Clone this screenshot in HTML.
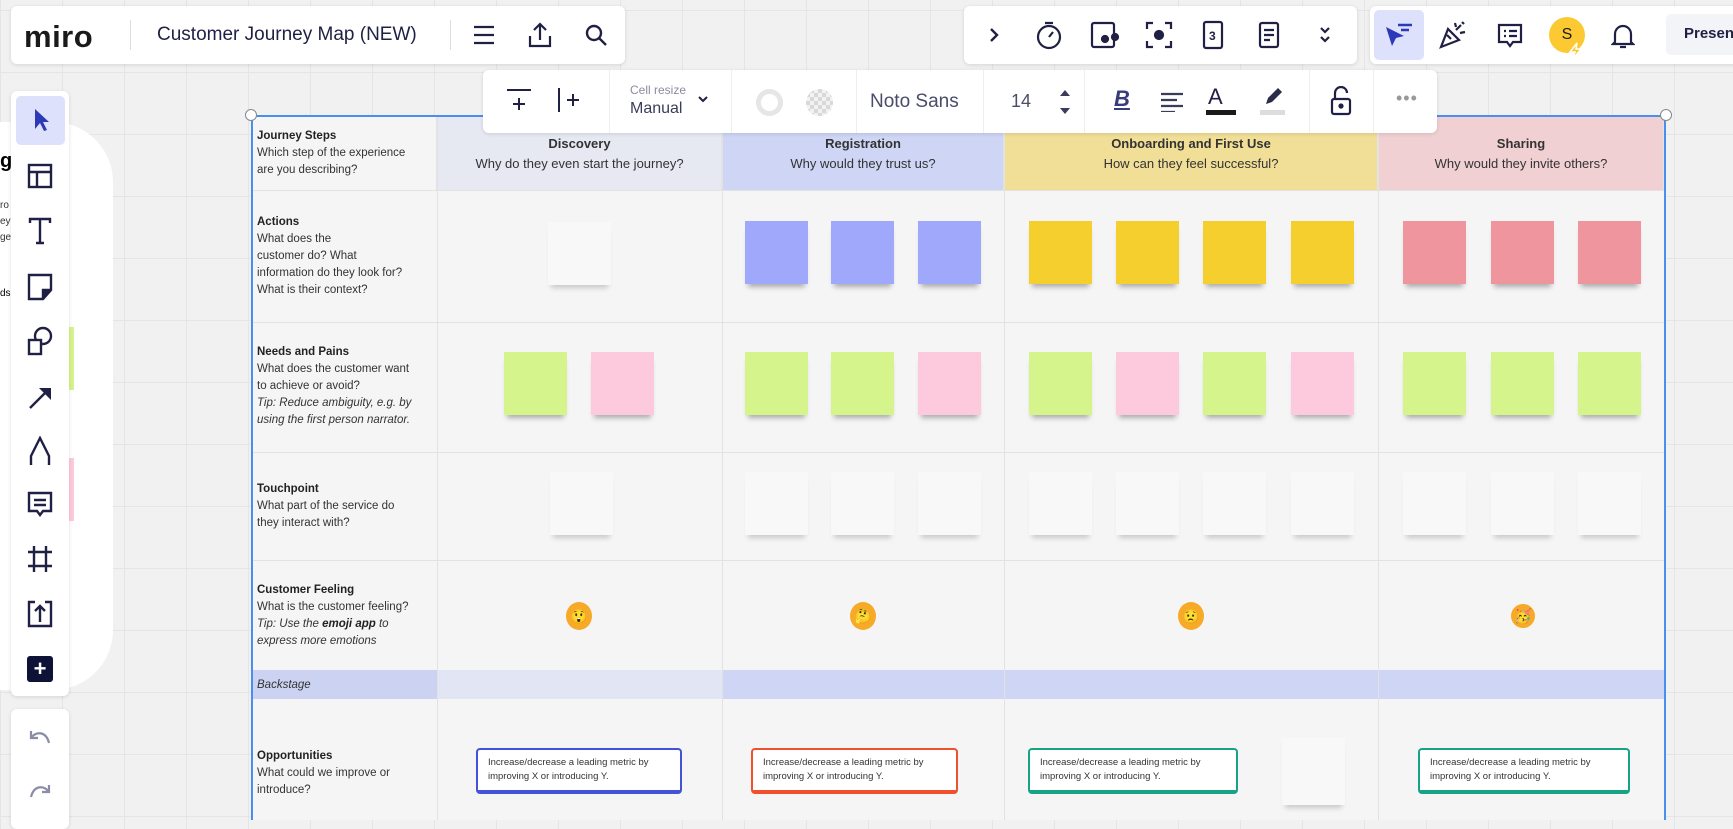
<!DOCTYPE html>
<html><head><meta charset="utf-8"><style>
*{box-sizing:border-box;margin:0;padding:0}
body{width:1733px;height:820px;overflow:hidden;position:relative;font-family:"Liberation Sans",sans-serif;background:#f1f1f1;
background-image:linear-gradient(#e5e5e5 1px,transparent 1px),linear-gradient(90deg,#e5e5e5 1px,transparent 1px);background-size:62px 62px;background-position:0 10px}
.a{position:absolute}
.panel{position:absolute;background:#fff;border-radius:6px;box-shadow:0 1px 4px rgba(0,0,0,.12)}
.cell{position:absolute;background:#f5f5f5;border-right:1px solid #e2e2e2;border-bottom:1px solid #e2e2e2}
.lab{position:absolute;left:257px;font-size:11.5px;line-height:17px;color:#333}
.lab b{color:#222}
.hd{position:absolute;text-align:center;font-size:13px;line-height:20px;color:#333}
.st{position:absolute;width:63px;height:63px;box-shadow:0 6px 5px -3px rgba(0,0,0,.3)}
.bl{background:#9fa8fa}.ye{background:#f5cf2e}.rd{background:#ee959e}.gr{background:#d6f48c}.pk{background:#fdc9dc}.wh{background:#f8f8f9;box-shadow:0 6px 5px -3px rgba(0,0,0,.18)}
.op{position:absolute;height:46px;background:#fff;border:2px solid;border-bottom-width:4px;border-radius:4px;font-size:9.5px;line-height:14px;color:#333;padding:6px 10px}
.em{position:absolute;width:26px;height:28px;border-radius:50%;background:#f7a928;font-size:14px;text-align:center;line-height:28px}
svg{position:absolute}
</style></head><body>

<div class="a" style="left:0;top:122px;width:113px;height:568px;background:#fff;border-radius:0 60px 60px 0"></div>
<div class="a" style="left:0;top:150px;font-size:20px;font-weight:bold">g</div>
<div class="a" style="left:0;top:198px;font-size:10px;line-height:16px;color:#333">ro<br>ey<br>ge</div>
<div class="a" style="left:0;top:288px;font-size:10px">ds</div>
<div class="a" style="left:69px;top:327px;width:5px;height:63px;background:#d6f48c"></div>
<div class="a" style="left:69px;top:458px;width:5px;height:63px;background:#fdc9dc"></div>

<div class="a" style="left:251px;top:115px;width:1415px;height:705px;background:#f5f5f5;border-left:2px solid #4a8ef0;border-right:2px solid #4a8ef0;border-top:2px solid #4a8ef0"></div>
<div class="cell" style="left:253px;top:117px;width:184px;height:74px"></div>
<div class="cell" style="left:437px;top:117px;width:285px;height:74px;background:#e6e8f2"></div>
<div class="cell" style="left:722px;top:117px;width:282px;height:74px;background:#cfd6f5"></div>
<div class="cell" style="left:1004px;top:117px;width:374px;height:74px;background:#f1df97"></div>
<div class="cell" style="left:1378px;top:117px;width:286px;height:74px;background:#f0d0d3"></div>
<div class="a" style="left:253px;top:322px;width:1411px;height:1px;background:#e2e2e2"></div>
<div class="a" style="left:253px;top:452px;width:1411px;height:1px;background:#e2e2e2"></div>
<div class="a" style="left:253px;top:560px;width:1411px;height:1px;background:#e2e2e2"></div>
<div class="a" style="left:253px;top:670px;width:1411px;height:29px;background:#cfd6f5"></div>
<div class="a" style="left:253px;top:670px;width:184px;height:29px;background:#ccd3f2"></div>
<div class="a" style="left:437px;top:670px;width:285px;height:29px;background:#e2e5f3"></div>
<div class="a" style="left:437px;top:117px;width:1px;height:703px;background:#e2e2e2"></div>
<div class="a" style="left:722px;top:117px;width:1px;height:703px;background:#e2e2e2"></div>
<div class="a" style="left:1004px;top:117px;width:1px;height:703px;background:#e2e2e2"></div>
<div class="a" style="left:1378px;top:117px;width:1px;height:703px;background:#e2e2e2"></div>
<div class="a" style="left:245px;top:109px;width:12px;height:12px;border-radius:50%;background:#fff;border:1.5px solid #888"></div>
<div class="a" style="left:1660px;top:109px;width:12px;height:12px;border-radius:50%;background:#fff;border:1.5px solid #888"></div>

<div class="lab" style="top:128px"><b>Journey Steps</b><br>Which step of the experience<br>are you describing?</div>
<div class="lab" style="top:214px"><b>Actions</b><br>What does the<br>customer do? What<br>information do they look for?<br>What is their context?</div>
<div class="lab" style="top:344px"><b>Needs and Pains</b><br>What does the customer want<br>to achieve or avoid?<br><i>Tip: Reduce ambiguity, e.g. by<br>using the first person narrator.</i></div>
<div class="lab" style="top:481px"><b>Touchpoint</b><br>What part of the service do<br>they interact with?</div>
<div class="lab" style="top:582px"><b>Customer Feeling</b><br>What is the customer feeling?<br><i>Tip: Use the <b>emoji app</b> to<br>express more emotions</i></div>
<div class="lab" style="top:677px"><i>Backstage</i></div>
<div class="lab" style="top:748px"><b>Opportunities</b><br>What could we improve or<br>introduce?</div>

<div class="hd" style="left:437px;top:134px;width:285px"><b>Discovery</b><br>Why do they even start the journey?</div>
<div class="hd" style="left:722px;top:134px;width:282px"><b>Registration</b><br>Why would they trust us?</div>
<div class="hd" style="left:1004px;top:134px;width:374px"><b>Onboarding and First Use</b><br>How can they feel successful?</div>
<div class="hd" style="left:1378px;top:134px;width:286px"><b>Sharing</b><br>Why would they invite others?</div>

<div class="st wh" style="left:548px;top:222px"></div>
<div class="st bl" style="left:745px;top:221px"></div><div class="st bl" style="left:831px;top:221px"></div><div class="st bl" style="left:918px;top:221px"></div>
<div class="st ye" style="left:1029px;top:221px"></div><div class="st ye" style="left:1116px;top:221px"></div><div class="st ye" style="left:1203px;top:221px"></div><div class="st ye" style="left:1291px;top:221px"></div>
<div class="st rd" style="left:1403px;top:221px"></div><div class="st rd" style="left:1491px;top:221px"></div><div class="st rd" style="left:1578px;top:221px"></div>
<div class="st gr" style="left:504px;top:352px"></div><div class="st pk" style="left:591px;top:352px"></div>
<div class="st gr" style="left:745px;top:352px"></div><div class="st gr" style="left:831px;top:352px"></div><div class="st pk" style="left:918px;top:352px"></div>
<div class="st gr" style="left:1029px;top:352px"></div><div class="st pk" style="left:1116px;top:352px"></div><div class="st gr" style="left:1203px;top:352px"></div><div class="st pk" style="left:1291px;top:352px"></div>
<div class="st gr" style="left:1403px;top:352px"></div><div class="st gr" style="left:1491px;top:352px"></div><div class="st gr" style="left:1578px;top:352px"></div>
<div class="st wh" style="left:550px;top:472px"></div>
<div class="st wh" style="left:745px;top:472px"></div><div class="st wh" style="left:831px;top:472px"></div><div class="st wh" style="left:918px;top:472px"></div>
<div class="st wh" style="left:1029px;top:472px"></div><div class="st wh" style="left:1116px;top:472px"></div><div class="st wh" style="left:1203px;top:472px"></div><div class="st wh" style="left:1291px;top:472px"></div>
<div class="st wh" style="left:1403px;top:472px"></div><div class="st wh" style="left:1491px;top:472px"></div><div class="st wh" style="left:1578px;top:472px"></div>
<div class="em" style="left:566px;top:602px">😲</div>
<div class="em" style="left:850px;top:602px">🤔</div>
<div class="em" style="left:1178px;top:602px">😟</div>
<div class="em" style="left:1511px;top:604px;width:24px;height:24px;line-height:24px">🥳</div>
<div class="op" style="left:476px;top:748px;width:206px;border-color:#4353d8">Increase/decrease a leading metric by<br>improving X or introducing Y.</div>
<div class="op" style="left:751px;top:748px;width:207px;border-color:#f0502e">Increase/decrease a leading metric by<br>improving X or introducing Y.</div>
<div class="op" style="left:1028px;top:748px;width:210px;border-color:#17a386">Increase/decrease a leading metric by<br>improving X or introducing Y.</div>
<div class="op" style="left:1418px;top:748px;width:212px;border-color:#17a386">Increase/decrease a leading metric by<br>improving X or introducing Y.</div>
<div class="st wh" style="left:1282px;top:738px;height:67px"></div>

<div class="panel" style="left:11px;top:6px;width:614px;height:58px"></div>
<div class="a" style="left:24px;top:19px;font-size:31px;font-weight:bold;color:#1a1a1a;letter-spacing:.5px">miro</div>
<div class="a" style="left:130px;top:20px;width:1px;height:30px;background:#ddd"></div>
<div class="a" style="left:157px;top:24px;font-size:19px;color:#1f2044">Customer Journey Map (NEW)</div>
<div class="a" style="left:450px;top:20px;width:1px;height:30px;background:#ddd"></div>
<svg style="left:472px;top:24px" width="24" height="22" viewBox="0 0 24 22" fill="none" stroke="#1f2044" stroke-width="2.2"><path d="M2 3h20M2 11h20M2 19h20"/></svg>
<svg style="left:527px;top:21px" width="26" height="28" viewBox="0 0 26 28" fill="none" stroke="#1f2044" stroke-width="2.2"><path d="M13 19V3M7 9l6-6 6 6M3 15v10h20V15"/></svg>
<svg style="left:584px;top:23px" width="24" height="24" viewBox="0 0 24 24" fill="none" stroke="#1f2044" stroke-width="2.4"><circle cx="10" cy="10" r="7"/><path d="M15 15l7 7"/></svg>

<div class="panel" style="left:964px;top:6px;width:393px;height:58px"></div>
<svg style="left:989px;top:28px" width="10" height="14" viewBox="0 0 10 14" fill="none" stroke="#1f2044" stroke-width="2.4"><path d="M2 1l6 6-6 6"/></svg>
<svg style="left:1035px;top:20px" width="28" height="30" viewBox="0 0 28 30" fill="none" stroke="#1f2044" stroke-width="2.2"><circle cx="14" cy="17" r="11"/><path d="M10 3h8M14 17l4-5"/></svg>
<svg style="left:1090px;top:21px" width="30" height="28" viewBox="0 0 30 28" fill="none" stroke="#1f2044" stroke-width="2.2"><rect x="2" y="2" width="22" height="24" rx="2"/><circle cx="15" cy="18" r="3" fill="#1f2044"/><circle cx="25" cy="16" r="3" fill="#1f2044"/></svg>
<svg style="left:1145px;top:21px" width="28" height="28" viewBox="0 0 28 28" fill="none" stroke="#1f2044" stroke-width="2.2"><path d="M2 8V2h6M20 2h6v6M26 20v6h-6M8 26H2v-6"/><circle cx="14" cy="14" r="4" fill="#1f2044"/></svg>
<svg style="left:1202px;top:20px" width="22" height="30" viewBox="0 0 22 30" fill="none" stroke="#1f2044" stroke-width="2.2"><rect x="2" y="2" width="18" height="26" rx="2"/><text x="7" y="20" font-size="12" font-family="Liberation Sans" fill="#1f2044" stroke="none" font-weight="bold">3</text></svg>
<svg style="left:1258px;top:21px" width="22" height="28" viewBox="0 0 22 28" fill="none" stroke="#1f2044" stroke-width="2.2"><rect x="2" y="2" width="18" height="24" rx="2"/><path d="M6 9h10M6 14h10M6 19h6"/></svg>
<svg style="left:1318px;top:26px" width="14" height="18" viewBox="0 0 14 18" fill="none" stroke="#1f2044" stroke-width="2.2"><path d="M3 2l4 4 4-4M3 11l4 4 4-4"/></svg>

<div class="panel" style="left:1370px;top:6px;width:380px;height:58px"></div>
<div class="a" style="left:1374px;top:10px;width:50px;height:50px;border-radius:5px;background:#dde1fb"></div>
<svg style="left:1384px;top:22px" width="30" height="26" viewBox="0 0 30 26"><path d="M2 5l6 19 4-8 8-2z" fill="#2d3ab8"/><path d="M14 3h14M17 8h8" stroke="#2d3ab8" stroke-width="2.4"/></svg>
<svg style="left:1438px;top:20px" width="30" height="30" viewBox="0 0 30 30" fill="none" stroke="#1f2044" stroke-width="2.2"><path d="M3 27l7-18 11 11z M9 15l4 4"/><path d="M18 10l5-5M22 13l5-1M17 3l1 4M24 2l2 2"/></svg>
<svg style="left:1496px;top:22px" width="28" height="28" viewBox="0 0 28 28" fill="none" stroke="#1f2044" stroke-width="2.2"><path d="M3 3h22v17H17l-3 4-3-4H3z"/><path d="M8 9h2M13 9h8M8 14h2M13 14h8"/></svg>
<div class="a" style="left:1549px;top:17px;width:36px;height:36px;border-radius:50%;background:#fcc933;text-align:center;line-height:36px;font-size:16px;color:#1a1a1a">S</div>
<svg style="left:1568px;top:42px" width="16" height="18" viewBox="0 0 16 18"><path d="M9 1L2 10h5l-2 7 8-10H8z" fill="#fcc933" stroke="#fff" stroke-width="1.5"/></svg>
<svg style="left:1611px;top:22px" width="24" height="28" viewBox="0 0 24 28" fill="none" stroke="#1f2044" stroke-width="2.2"><path d="M4 20V12a8 8 0 0116 0v8l2 2H2z M9 25h6"/></svg>
<div class="a" style="left:1666px;top:14px;width:80px;height:41px;border-radius:5px;background:#f3f4f7;font-size:15px;font-weight:bold;color:#1f2044;padding:11px 0 0 18px">Presen</div>

<div class="panel" style="left:483px;top:70px;width:954px;height:63px"></div>
<svg style="left:505px;top:86px" width="28" height="28" viewBox="0 0 28 28" fill="none" stroke="#1f2044" stroke-width="2"><path d="M2 4h24M14 12v12M8 18h12"/></svg>
<svg style="left:555px;top:86px" width="26" height="28" viewBox="0 0 26 28" fill="none" stroke="#1f2044" stroke-width="2"><path d="M4 2v24M12 14h12M18 8v12"/></svg>
<div class="a" style="left:609px;top:70px;width:1px;height:63px;background:#eee"></div>
<div class="a" style="left:630px;top:83px;font-size:12px;color:#8a8ca0">Cell resize</div>
<div class="a" style="left:630px;top:100px;font-size:16px;color:#3a3c5a">Manual</div>
<svg style="left:698px;top:96px" width="10" height="8" viewBox="0 0 10 8" fill="none" stroke="#1f2044" stroke-width="2"><path d="M1 1l4 4 4-4"/></svg>
<div class="a" style="left:731px;top:70px;width:1px;height:63px;background:#eee"></div>
<div class="a" style="left:756px;top:89px;width:27px;height:27px;border-radius:50%;border:5px solid #e6e6e6"></div>
<div class="a" style="left:806px;top:89px;width:27px;height:27px;border-radius:50%;background:repeating-conic-gradient(#d8d8d8 0 25%,#f2f2f2 0 50%) 0 0/8px 8px"></div>
<div class="a" style="left:856px;top:70px;width:1px;height:63px;background:#eee"></div>
<div class="a" style="left:870px;top:91px;font-size:19px;color:#4a4c6a">Noto Sans</div>
<div class="a" style="left:983px;top:70px;width:1px;height:63px;background:#eee"></div>
<div class="a" style="left:1011px;top:91px;font-size:18px;color:#4a4c6a">14</div>
<svg style="left:1058px;top:88px" width="14" height="28" viewBox="0 0 14 28" fill="#3a3c5a"><path d="M2 8l5-6 5 6zM2 20l5 6 5-6z"/></svg>
<div class="a" style="left:1084px;top:70px;width:1px;height:63px;background:#eee"></div>
<div class="a" style="left:1114px;top:86px;font-size:22px;font-weight:bold;font-style:italic;color:#3a3c7a;text-decoration:underline">B</div>
<svg style="left:1160px;top:92px" width="26" height="20" viewBox="0 0 26 20" fill="none" stroke="#3a3c5a" stroke-width="2.2"><path d="M1 2h22M1 8h16M1 14h22M1 20h14"/></svg>
<div class="a" style="left:1208px;top:84px;font-size:22px;color:#1f2044">A</div>
<div class="a" style="left:1206px;top:110px;width:30px;height:5px;background:#1a1a1a"></div>
<svg style="left:1262px;top:86px" width="24" height="22" viewBox="0 0 24 22"><path d="M4 18l2-6 10-10 4 4-10 10z" fill="#2a2c4a"/></svg>
<div class="a" style="left:1260px;top:110px;width:25px;height:5px;background:#ddd"></div>
<div class="a" style="left:1309px;top:70px;width:1px;height:63px;background:#eee"></div>
<svg style="left:1330px;top:86px" width="22" height="30" viewBox="0 0 22 30" fill="none" stroke="#1f2044" stroke-width="2.2"><path d="M5 12V7a6 6 0 0112 0"/><rect x="2" y="13" width="18" height="15" rx="2"/><circle cx="11" cy="20" r="1.5" fill="#1f2044"/></svg>
<div class="a" style="left:1373px;top:70px;width:1px;height:63px;background:#eee"></div>
<div class="a" style="left:1396px;top:88px;font-size:18px;color:#999;letter-spacing:1px">•••</div>

<div class="panel" style="left:11px;top:91px;width:58px;height:605px"></div>
<div class="a" style="left:16px;top:96px;width:49px;height:49px;border-radius:5px;background:#dde1fb"></div>
<svg style="left:33px;top:107px" width="16" height="26" viewBox="0 0 16 26"><path d="M2 2v20l5-6 4 8 3-1-4-8h6z" fill="#2d3ab8"/></svg>
<svg style="left:27px;top:163px" width="26" height="26" viewBox="0 0 26 26" fill="none" stroke="#1f2044" stroke-width="2.4"><rect x="2" y="2" width="22" height="22"/><path d="M2 9h22M10 9v15"/></svg>
<svg style="left:28px;top:217px" width="24" height="28" viewBox="0 0 24 28" fill="none" stroke="#1f2044" stroke-width="2.4"><path d="M2 6V2h20v4M12 2v24M8 26h8"/></svg>
<svg style="left:27px;top:273px" width="26" height="28" viewBox="0 0 26 28" fill="none" stroke="#1f2044" stroke-width="2.4"><path d="M2 2h22v15l-8 9H2z"/><path d="M16 26v-9h8" fill="#1f2044"/></svg>
<svg style="left:27px;top:326px" width="26" height="30" viewBox="0 0 26 30" fill="none" stroke="#1f2044" stroke-width="2.4"><circle cx="16" cy="10" r="8"/><rect x="2" y="14" width="12" height="14" fill="#fff"/></svg>
<svg style="left:27px;top:383px" width="26" height="28" viewBox="0 0 26 28" fill="none" stroke="#1f2044" stroke-width="2.4"><path d="M3 25L22 6"/><path d="M12 5h12v12z" fill="#1f2044" stroke="none"/></svg>
<svg style="left:27px;top:436px" width="26" height="30" viewBox="0 0 26 30" fill="none" stroke="#1f2044" stroke-width="2.4"><path d="M4 29V20L13 2l9 18v9"/></svg>
<svg style="left:27px;top:491px" width="26" height="28" viewBox="0 0 26 28" fill="none" stroke="#1f2044" stroke-width="2.4"><path d="M2 2h22v18H16l-3 4-3-4H2z"/><path d="M7 9h12M7 14h12"/></svg>
<svg style="left:27px;top:545px" width="26" height="28" viewBox="0 0 26 28" fill="none" stroke="#1f2044" stroke-width="2.4"><path d="M7 1v26M19 1v26M1 7h24M1 21h24"/></svg>
<svg style="left:27px;top:600px" width="26" height="28" viewBox="0 0 26 28" fill="none" stroke="#1f2044" stroke-width="2.4"><path d="M8 2H2v24h22V2h-6M13 22V6M8 11l5-5 5 5"/></svg>
<div class="a" style="left:27px;top:656px;width:26px;height:26px;border-radius:3px;background:#0e1236;color:#fff;text-align:center;line-height:26px;font-size:22px;font-weight:bold">+</div>
<div class="panel" style="left:11px;top:709px;width:58px;height:120px"></div>
<svg style="left:28px;top:729px" width="24" height="18" viewBox="0 0 24 18" fill="none" stroke="#8a8ca8" stroke-width="2.2"><path d="M3 2v7h7"/><path d="M3 9C8 2 18 2 21 14"/></svg>
<svg style="left:28px;top:783px" width="24" height="18" viewBox="0 0 24 18" fill="none" stroke="#8a8ca8" stroke-width="2.2"><path d="M21 2v7h-7"/><path d="M21 9C16 2 6 2 3 14"/></svg>
</body></html>
